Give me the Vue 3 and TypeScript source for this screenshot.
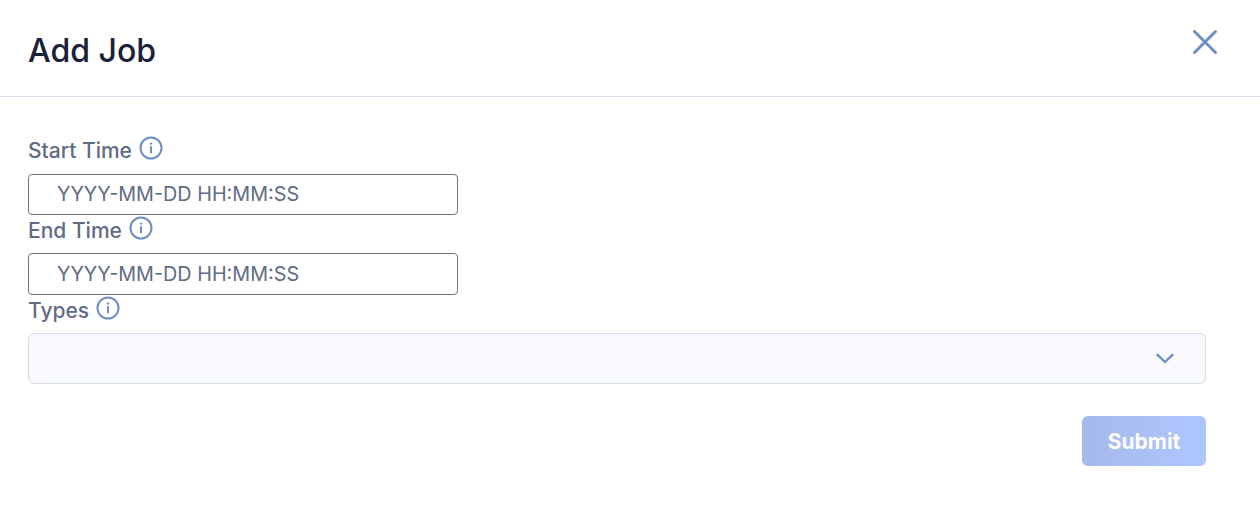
<script setup lang="ts">
const fields: string[] = ['Start Time', 'End Time']
</script>

<template>
  <div class="modal">
    <header class="head">
      <h1 class="title">Add Job</h1>
      <button class="close" type="button" aria-label="Close">
        <svg width="26" height="26" viewBox="0 0 26 26" fill="none" stroke="#6e8fc0" stroke-width="3" stroke-linecap="round">
          <path d="M2.5 2.5 L23.5 23.5 M23.5 2.5 L2.5 23.5" />
        </svg>
      </button>
    </header>
    <form class="body" @submit.prevent>
      <div v-for="f in fields" :key="f" class="field">
        <div class="label">
          <span class="text">{{ f }}</span>
          <svg class="info" width="24" height="24" viewBox="0 0 24 24" fill="none" stroke="#6e8fc0">
            <circle cx="12" cy="12" r="10.5" stroke-width="2" />
            <path d="M12 11 V16.5" stroke-width="2" stroke-linecap="round" />
            <circle cx="12" cy="7.6" r="1.2" fill="#6e8fc0" stroke="none" />
          </svg>
        </div>
        <input class="date" type="text" placeholder="YYYY-MM-DD HH:MM:SS" />
      </div>
      <div class="field">
        <div class="label">
          <span class="text">Types</span>
          <svg class="info" width="24" height="24" viewBox="0 0 24 24" fill="none" stroke="#6e8fc0">
            <circle cx="12" cy="12" r="10.5" stroke-width="2" />
            <path d="M12 11 V16.5" stroke-width="2" stroke-linecap="round" />
            <circle cx="12" cy="7.6" r="1.2" fill="#6e8fc0" stroke="none" />
          </svg>
        </div>
        <div class="select">
          <svg width="18" height="11" viewBox="0 0 18 11" fill="none" stroke="#6e8fc0" stroke-width="2.4" stroke-linecap="round" stroke-linejoin="round">
            <path d="M1.5 1.8 L9 9 L16.5 1.8" />
          </svg>
        </div>
      </div>
      <div class="actions">
        <button class="submit" type="submit">Submit</button>
      </div>
    </form>
  </div>
</template>

<style>
html, body { margin: 0; background: #fff; }
</style>

<style scoped>
.modal {
  width: 1260px;
  height: 512px;
  box-sizing: border-box;
  font-family: Inter, "Liberation Sans", sans-serif;
  background: #fff;
}
.head {
  height: 97px;
  box-sizing: border-box;
  border-bottom: 1px solid #d9dcea;
  padding: 0 42px 0 28px;
  display: flex;
  justify-content: space-between;
  align-items: flex-start;
}
.title {
  margin: 31px 0 0;
  font-size: 32px;
  line-height: 40px;
  font-weight: 500;
  color: #1a2138;
}
.close {
  margin-top: 29px;
  padding: 0;
  border: 0;
  background: none;
  display: flex;
}
.body {
  padding: 39px 54px 0 28px;
  display: flex;
  flex-direction: column;
}
.label {
  height: 38px;
  box-sizing: border-box;
  display: flex;
  align-items: flex-start;
  gap: 7px;
  font-size: 21px;
  line-height: 28px;
  font-weight: 500;
  color: #5f6b85;
}
.text { margin-top: 1px; }
.field + .field .text { margin-top: 2px; }
.field + .field .label { padding-top: 1px; }
.field + .field .text { margin-top: 1px; }
.date {
  display: block;
  width: 430px;
  height: 41px;
  box-sizing: border-box;
  border: 1px solid #767676;
  border-radius: 4px;
  padding: 0 28px 2px;
  font: 400 19.8px Inter, "Liberation Sans", sans-serif;
  color: #5f6b85;
  background: #fff;
  outline: none;
}
.date::placeholder { color: #5f6b85; opacity: 1; }
.field:nth-child(2) .date { height: 42px; padding-bottom: 0; }
.select {
  height: 51px;
  box-sizing: border-box;
  border: 1px solid #d9dcea;
  border-radius: 6px;
  background: #f8f9fc;
  display: flex;
  align-items: center;
  justify-content: flex-end;
  padding-right: 31px;
}
.actions {
  margin-top: 32px;
  display: flex;
  justify-content: flex-end;
}
.submit {
  width: 124px;
  height: 50px;
  border: 0;
  border-radius: 6px;
  background: linear-gradient(90deg, #a6b9eb 0%, #aec6ff 100%);
  color: #fff;
  opacity: 1;
  font: 700 21px Inter, "Liberation Sans", sans-serif;
}
</style>
